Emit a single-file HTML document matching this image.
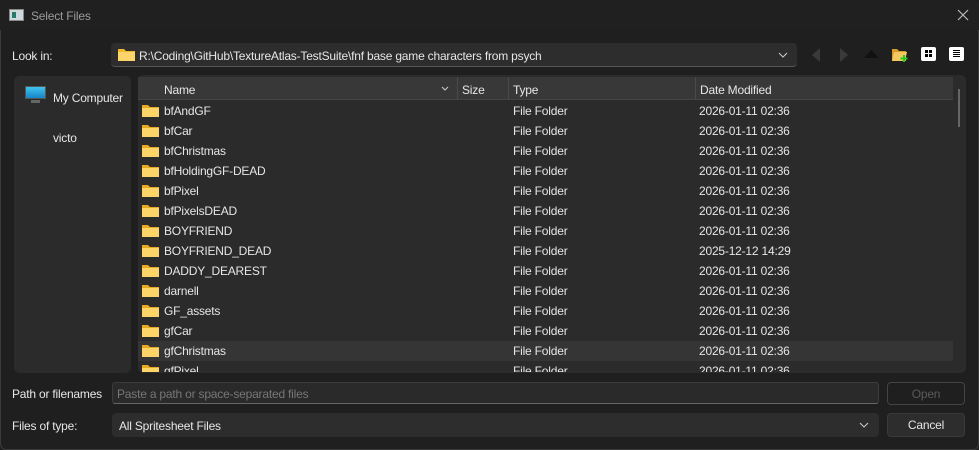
<!DOCTYPE html>
<html><head><meta charset="utf-8"><style>
*{margin:0;padding:0;box-sizing:border-box}
body{width:979px;height:450px;background:#1f1f1f;font-family:"Liberation Sans",sans-serif;font-size:12px;color:#e6e6e6;position:relative;overflow:hidden;letter-spacing:-0.2px}
.a{position:absolute}
</style></head><body>
<div class="a" style="left:0;top:0;width:979px;height:450px;border:1px solid #3a3a3a;border-radius:6px"></div>
<div class="a" style="left:0;top:0;width:979px;height:30px;background:#202020;border-radius:6px 6px 0 0"></div>
<div class="a" style="left:9px;top:9px;width:15px;height:12px;background:#cfd8dc;border:1px solid #888"><div style="margin:2px;width:4px;height:6px;background:#2a7a6a"></div></div>
<div class="a" style="left:31px;top:9px;color:#9a9a9a">Select Files</div>
<svg class="a" style="left:957px;top:9px" width="12" height="12"><path d="M1 1L11 11M11 1L1 11" stroke="#bbb" stroke-width="1.2"/></svg>

<div class="a" style="left:12px;top:49px">Look in:</div>
<div class="a" style="left:111px;top:43px;width:686px;height:24px;background:#2d2d2d;border-radius:4px;border-bottom:1px solid #555"></div>
<svg class="a" style="left:118px;top:47px" width="17" height="14"><path d="M0 2h6l2 2h9v10H0z" fill="#f2b92f"/><rect x="0" y="5" width="17" height="9" fill="#fcd56a"/></svg>
<div class="a" style="left:139px;top:49px">R:\Coding\GitHub\TextureAtlas-TestSuite\fnf base game characters from psych</div>
<svg class="a" style="left:778px;top:52px" width="10" height="6"><path d="M1 1l4 4 4-4" stroke="#ccc" fill="none"/></svg>
<svg class="a" style="left:811px;top:48px" width="10" height="14"><path d="M9 0L1 7l8 7z" fill="#3a3a3a"/></svg>
<svg class="a" style="left:839px;top:48px" width="10" height="14"><path d="M1 0l8 7-8 7z" fill="#3a3a3a"/></svg>
<svg class="a" style="left:864px;top:50px" width="15" height="8"><path d="M0 8L7.5 0 15 8z" fill="#111"/></svg>
<svg class="a" style="left:891px;top:45px" width="17" height="18"><path d="M1 4h5l2 2h7v10H1z" fill="#d99a2a"/><path d="M3 7h13l-2 9H1z" fill="#f4c860"/><rect x="12" y="10" width="2" height="7" fill="#2c2"/><rect x="9.5" y="12.5" width="7" height="2" fill="#2c2"/></svg>
<div class="a" style="left:921px;top:47px;width:15px;height:14px;background:#fff;border-radius:2px"><div style="position:absolute;left:4px;top:3px;width:3px;height:3px;background:#000;box-shadow:4px 0 #000,0 4px #000,4px 4px #000"></div></div>
<div class="a" style="left:949px;top:47px;width:15px;height:14px;background:#fff;border-radius:2px"><div style="position:absolute;left:4px;top:3px;width:7px;height:1px;background:#000;box-shadow:0 2px #000,0 4px #000,0 6px #000"></div></div>

<div class="a" style="left:14px;top:76px;width:117px;height:297px;background:#2b2b2b;border-radius:5px"></div>
<div class="a" style="left:25px;top:86px;width:21px;height:13px;background:linear-gradient(#3fc4ef,#1585c7);border:1px solid #555"></div>
<div class="a" style="left:31px;top:100px;width:9px;height:3px;background:#666"></div>
<div class="a" style="left:53px;top:91px">My Computer</div>
<div class="a" style="left:53px;top:131px">victo</div>

<div class="a" style="left:138px;top:75px;width:828px;height:298px;background:#2b2b2b;border-radius:5px"></div>
<div class="a" style="left:138px;top:77px;width:815px;height:23px;background:#383838;border-bottom:1px solid #444"></div>
<div class="a" style="left:457px;top:77px;width:1px;height:23px;background:#4a4a4a"></div>
<div class="a" style="left:508px;top:77px;width:1px;height:23px;background:#4a4a4a"></div>
<div class="a" style="left:695px;top:77px;width:1px;height:23px;background:#4a4a4a"></div>
<div class="a" style="left:164px;top:83px">Name</div>
<svg class="a" style="left:441px;top:86px" width="8" height="5"><path d="M1 1l3 3 3-3" stroke="#ccc" fill="none"/></svg>
<div class="a" style="left:462px;top:83px">Size</div>
<div class="a" style="left:513px;top:83px">Type</div>
<div class="a" style="left:700px;top:83px">Date Modified</div>
<div class="a" style="left:958px;top:89px;width:2px;height:38px;background:#666"></div>
<div class="a" style="left:138px;top:341px;width:815px;height:20px;background:#353535"></div>
<div class="a" style="left:138px;top:100px;width:815px;height:272px;overflow:hidden" id="l"></div>
<script>
var n=["bfAndGF","bfCar","bfChristmas","bfHoldingGF-DEAD","bfPixel","bfPixelsDEAD","BOYFRIEND","BOYFRIEND_DEAD","DADDY_DEAREST","darnell","GF_assets","gfCar","gfChristmas","gfPixel"];
var h="";n.forEach(function(s,i){var d=i==7?"2025-12-12 14:29":"2026-01-11 02:36";
h+='<div style="position:absolute;left:0;top:'+(i*20+1)+'px;width:815px;height:20px;line-height:20px"><svg style="position:absolute;left:4px;top:2px" width="17" height="14"><path d="M0 2h6l2 2h9v10H0z" fill="#e8a820"/><rect y="5" width="17" height="9" fill="#fcd468"/></svg><span style="position:absolute;left:26px">'+s+'</span><span style="position:absolute;left:375px">File Folder</span><span style="position:absolute;left:561px">'+d+'</span></div>'});
document.getElementById("l").innerHTML=h;
</script>

<div class="a" style="left:12px;top:387px">Path or filenames</div>
<div class="a" style="left:112px;top:382px;width:767px;height:22px;background:#2a2a2a;border:1px solid #3c3c3c;border-bottom-color:#666;border-radius:3px"></div>
<div class="a" style="left:117px;top:387px;color:#777">Paste a path or space-separated files</div>
<div class="a" style="left:887px;top:382px;width:78px;height:23px;border:1px solid #444;border-radius:4px;color:#5a5a5a;text-align:center;line-height:22px">Open</div>
<div class="a" style="left:12px;top:419px">Files of type:</div>
<div class="a" style="left:112px;top:413px;width:767px;height:24px;background:#2d2d2d;border-radius:4px"></div>
<div class="a" style="left:119px;top:419px">All Spritesheet Files</div>
<svg class="a" style="left:859px;top:422px" width="10" height="6"><path d="M1 1l4 4 4-4" stroke="#ccc" fill="none"/></svg>
<div class="a" style="left:887px;top:413px;width:78px;height:24px;background:#2d2d2d;border:1px solid #3a3a3a;border-radius:4px;text-align:center;line-height:23px">Cancel</div>
</body></html>
